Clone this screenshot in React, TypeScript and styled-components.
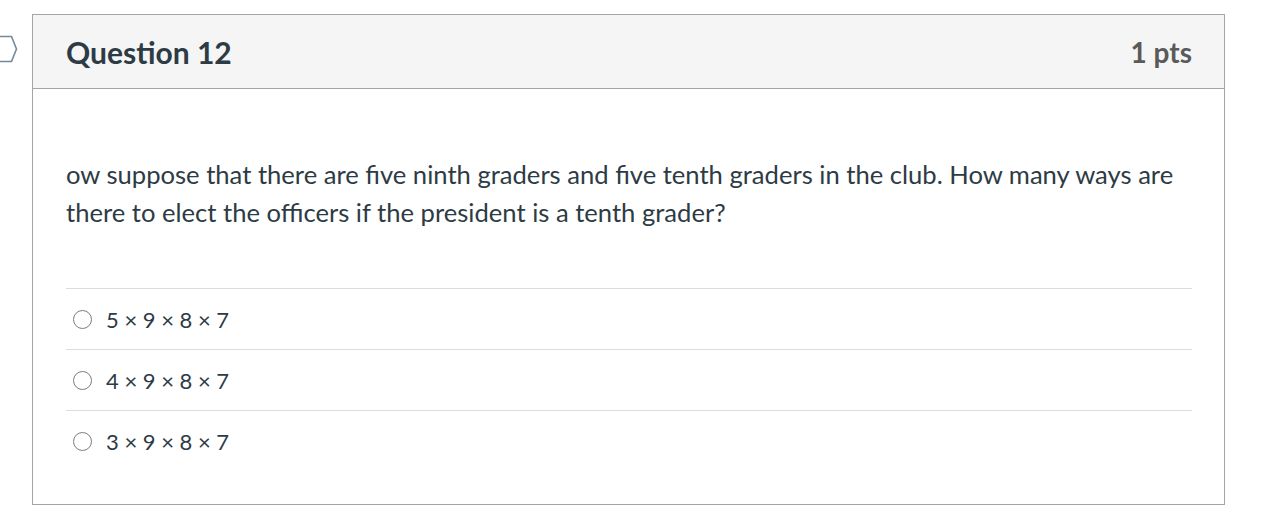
import styled, { createGlobalStyle } from "styled-components";

const options = ["5 × 9 × 8 × 7", "4 × 9 × 8 × 7", "3 × 9 × 8 × 7"];

export default function App() {
  return (
    <>
      <GlobalStyle />
      <Page>
        <Flag>
          <svg width="20" height="30" viewBox="0 0 20 30">
            <path
              d="M-4 1.5 H11.5 L16.5 14 L11.5 26.5 H-4"
              fill="none"
              stroke="#75889a"
              strokeWidth="1.6"
              strokeLinejoin="round"
            />
          </svg>
        </Flag>
        <Card>
          <Header>
            <Title>Question 12</Title>
            <Points>1 pts</Points>
          </Header>
          <Body>
            <Prompt>
              ow suppose that there are five ninth graders and five tenth graders in the club. How many ways are
              there to elect the officers if the president is a tenth grader?
            </Prompt>
            <Answers>
              {options.map((o) => (
                <Answer key={o}>
                  <Radio />
                  <AnswerText>{o}</AnswerText>
                </Answer>
              ))}
            </Answers>
          </Body>
        </Card>
      </Page>
    </>
  );
}

const GlobalStyle = createGlobalStyle`
  body {
    margin: 0;
    background: #fff;
    font-family: Lato, "Noto Sans", sans-serif;
    color: #2d3b45;
  }
`;

const Page = styled.div`
  position: relative;
  padding: 14px 0 0 32px;
  width: 1266px;
  height: 532px;
  box-sizing: border-box;
`;

const Flag = styled.div`
  position: absolute;
  left: 0;
  top: 35px;
  line-height: 0;
`;

const Card = styled.div`
  width: 1193px;
  height: 491px;
  box-sizing: border-box;
  border: 1px solid #a5a5a5;
`;

const Header = styled.div`
  display: flex;
  justify-content: space-between;
  align-items: center;
  height: 74px;
  box-sizing: border-box;
  padding: 0 32px 0 33px;
  background: #f5f5f5;
  border-bottom: 1px solid #a5a5a5;
`;

const Title = styled.h2`
  margin: 0;
  font-size: 30px;
  font-weight: 700;
  color: #2d3b45;
`;

const Points = styled.div`
  font-size: 28px;
  font-weight: 700;
  color: #5a5a5a;
`;

const Body = styled.div`
  padding: 66px 32px 0 33px;
`;

const Prompt = styled.p`
  margin: 0 0 57px;
  font-size: 25.6px;
  line-height: 38px;
  color: #2d3b45;
`;

const Answers = styled.div`
  display: flex;
  flex-direction: column;
`;

const Answer = styled.label`
  display: flex;
  align-items: center;
  height: 60px;
  border-top: 1px solid #dcdcdc;
  padding-left: 7px;
`;

const Radio = styled.span`
  width: 19px;
  height: 19px;
  border: 1.5px solid #7d7d7d;
  border-radius: 50%;
  box-sizing: border-box;
  margin-right: 14px;
`;

const AnswerText = styled.span`
  font-size: 22px;
  color: #2d3b45;
`;
